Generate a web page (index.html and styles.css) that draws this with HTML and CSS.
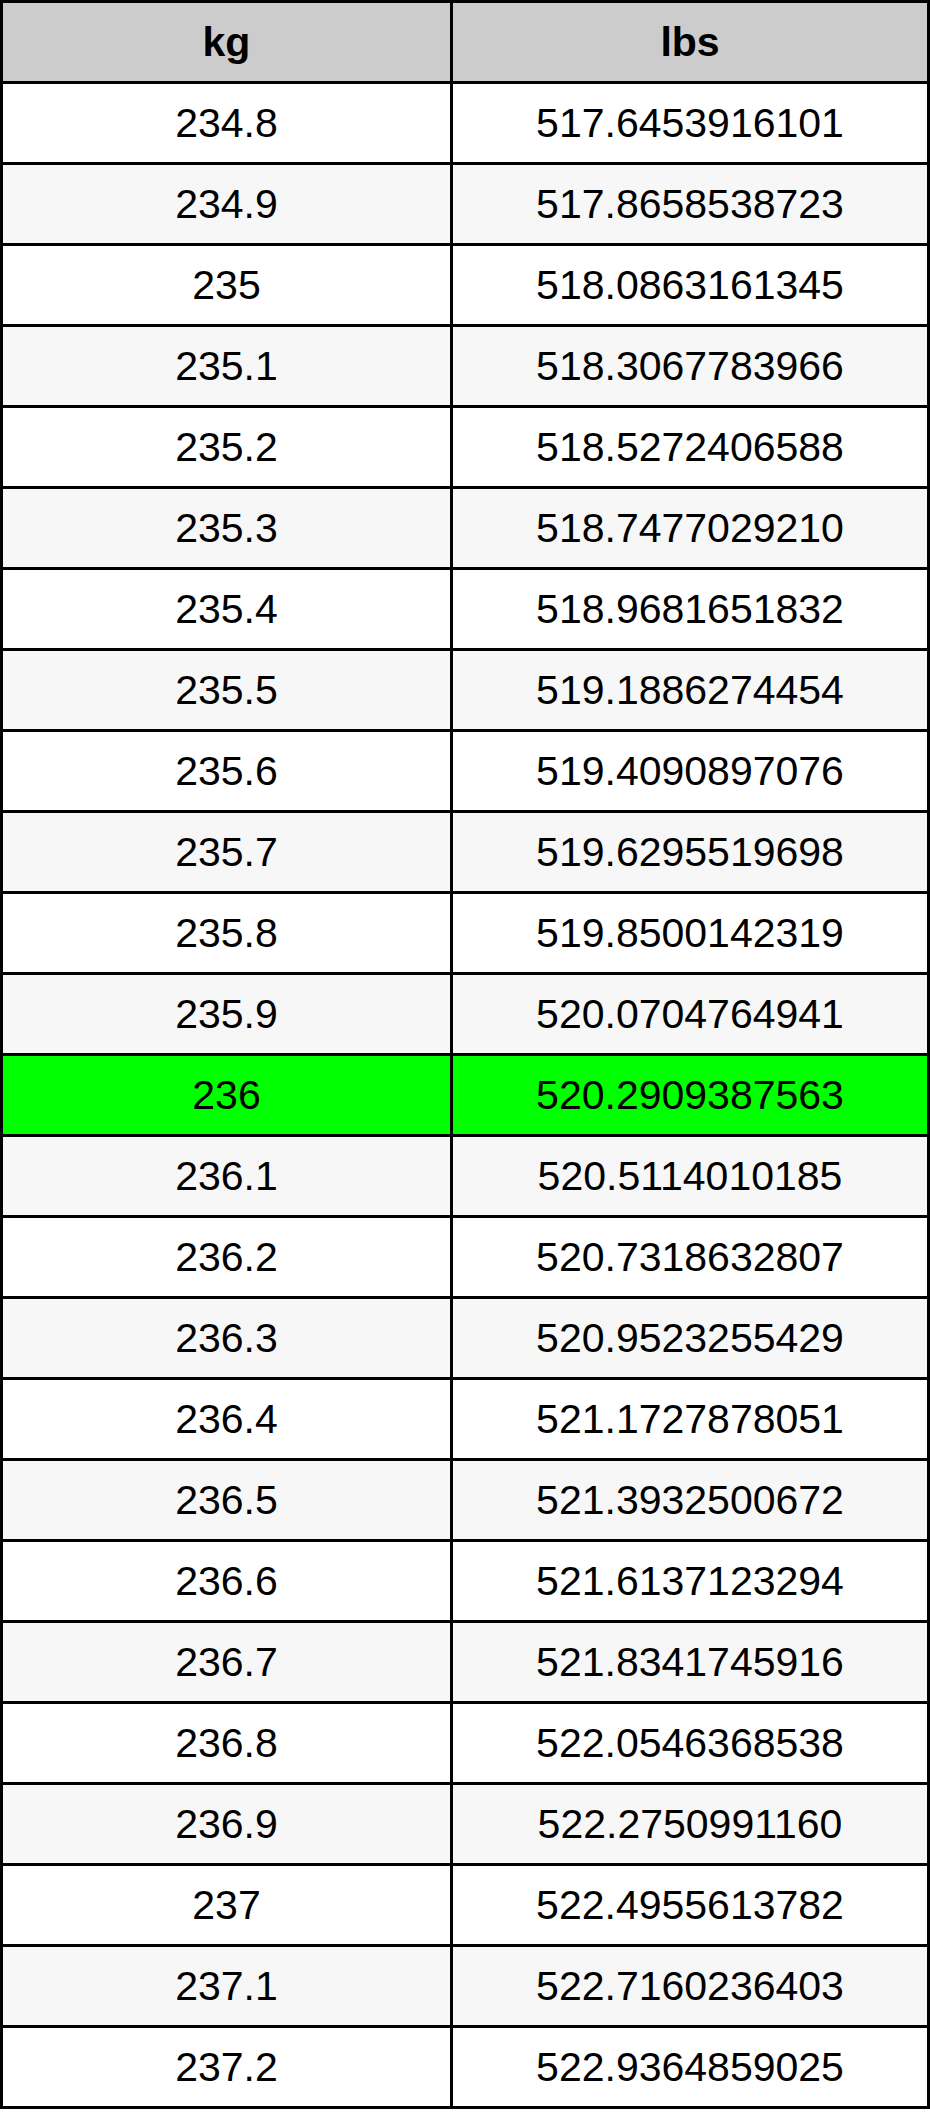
FILE: index.html
```html
<!DOCTYPE html>
<html>
<head>
<meta charset="utf-8">
<link rel="stylesheet" href="styles.css">
</head>
<body>
<table class="conv">
<thead>
<tr><th class="c-kg">kg</th><th class="c-lbs">lbs</th></tr>
</thead>
<tbody>
<tr><td>234.8</td><td>517.6453916101</td></tr>
<tr><td>234.9</td><td>517.8658538723</td></tr>
<tr><td>235</td><td>518.0863161345</td></tr>
<tr><td>235.1</td><td>518.3067783966</td></tr>
<tr><td>235.2</td><td>518.5272406588</td></tr>
<tr><td>235.3</td><td>518.7477029210</td></tr>
<tr><td>235.4</td><td>518.9681651832</td></tr>
<tr><td>235.5</td><td>519.1886274454</td></tr>
<tr><td>235.6</td><td>519.4090897076</td></tr>
<tr><td>235.7</td><td>519.6295519698</td></tr>
<tr><td>235.8</td><td>519.8500142319</td></tr>
<tr><td>235.9</td><td>520.0704764941</td></tr>
<tr class="hl"><td>236</td><td>520.2909387563</td></tr>
<tr><td>236.1</td><td>520.5114010185</td></tr>
<tr><td>236.2</td><td>520.7318632807</td></tr>
<tr><td>236.3</td><td>520.9523255429</td></tr>
<tr><td>236.4</td><td>521.1727878051</td></tr>
<tr><td>236.5</td><td>521.3932500672</td></tr>
<tr><td>236.6</td><td>521.6137123294</td></tr>
<tr><td>236.7</td><td>521.8341745916</td></tr>
<tr><td>236.8</td><td>522.0546368538</td></tr>
<tr><td>236.9</td><td>522.2750991160</td></tr>
<tr><td>237</td><td>522.4955613782</td></tr>
<tr><td>237.1</td><td>522.7160236403</td></tr>
<tr><td>237.2</td><td>522.9364859025</td></tr>
</tbody>
</table>
</body>
</html>
```

FILE: styles.css
```css
html, body {
  margin: 0;
  padding: 0;
  background: #ffffff;
}

.conv {
  width: 930px;
  table-layout: fixed;
  border-collapse: separate;
  border-spacing: 0;
  border-top: 3px solid #000;
  border-left: 3px solid #000;
  font-family: "Liberation Sans", Arial, sans-serif;
  font-size: 41px;
  color: #000;
}

.conv th,
.conv td {
  padding: 0;
  line-height: 78px;
  text-align: center;
  border-right: 3px solid #000;
  border-bottom: 3px solid #000;
  white-space: nowrap;
}

.conv th {
  background: #cccccc;
  font-weight: bold;
}

.conv .c-kg {
  width: 447px;
}

.conv tbody tr:nth-child(odd) td {
  background: #ffffff;
}

.conv tbody tr:nth-child(even) td {
  background: #f7f7f7;
}

.conv tbody tr.hl td {
  background: #00ff00;
}
```
